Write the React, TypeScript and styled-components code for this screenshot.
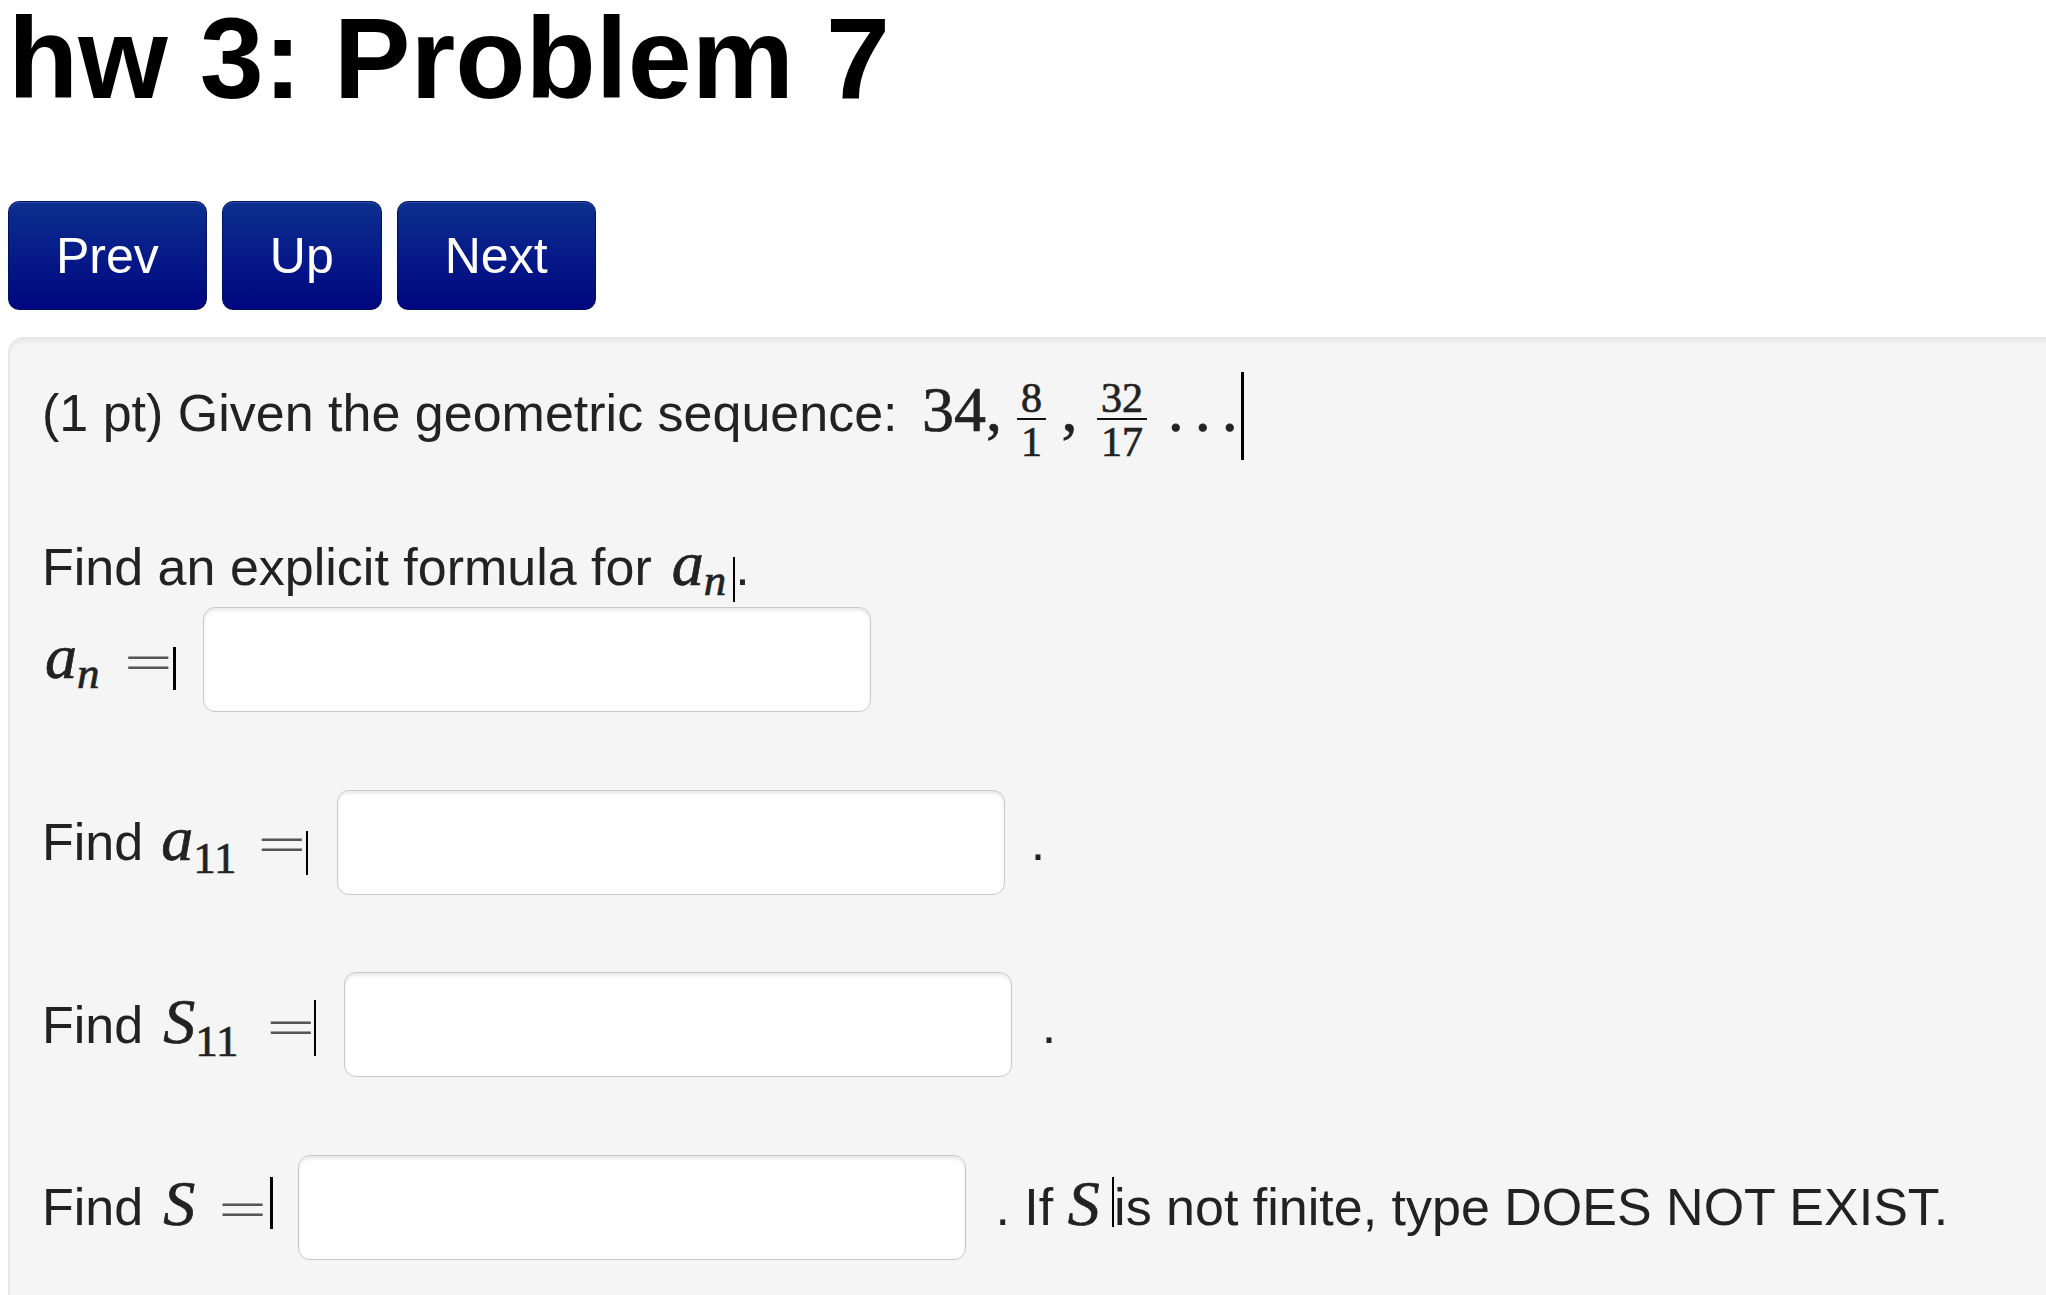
import React from "react";
import styled, { createGlobalStyle } from "styled-components";

const GlobalStyle = createGlobalStyle`
  html, body {
    margin: 0;
    padding: 0;
    overflow: hidden;
    background: #fff;
  }
  body {
    font-family: "Liberation Sans", Arial, sans-serif;
    color: #222;
  }
`;

const Page = styled.div`
  padding-left: 8px;
`;

const Title = styled.h1`
  margin: 0;
  font-size: 115px;
  line-height: 116px;
  font-weight: bold;
  color: #000;
`;

const NavBar = styled.div`
  display: flex;
  gap: 15px;
  margin-top: 85px;
`;

const NavButton = styled.button`
  font-family: "Liberation Sans", Arial, sans-serif;
  font-size: 50px;
  line-height: 60px;
  padding: 23.5px 47px;
  color: #fff;
  border: 1px solid #00115e;
  border-radius: 11px;
  background: linear-gradient(to bottom, #0c2f8f, #000680);
  box-shadow: inset 0 1px 0 rgba(255, 255, 255, 0.15);
  cursor: pointer;
`;

const Well = styled.div`
  margin-top: 27px;
  margin-right: -40px;
  padding: 45px 0 120px 33px;
  background: #f5f5f5;
  border: 1px solid #e3e3e3;
  border-radius: 15px;
  box-shadow: inset 0 4px 4px rgba(0, 0, 0, 0.05);
  font-size: 52px;
  white-space: nowrap;
`;

const SequenceLine = styled.div`
  line-height: 60px;
  height: 74px;
  margin-bottom: 80px;
`;

const TextLine = styled.div`
  line-height: 60px;
`;

const Math = styled.span<{ $ml?: number }>`
  font-family: "Liberation Serif", "Times New Roman", serif;
  font-size: 64px;
  line-height: 40px;
  -webkit-text-stroke: 0.7px currentColor;
  margin-left: ${(p) => p.$ml ?? 0}px;
`;

const Dots = styled(Math)`
  letter-spacing: 11px;
  margin-right: -11px;
`;

const Period = styled.span`
  margin-left: 9px;
`;

const Fraction = styled.span<{ $ml?: number }>`
  display: inline-flex;
  flex-direction: column;
  vertical-align: 19px;
  margin-left: ${(p) => p.$ml ?? 0}px;
  font-family: "Liberation Serif", "Times New Roman", serif;
  font-size: 42px;
  line-height: 30px;
  text-align: center;
  -webkit-text-stroke: 0.7px currentColor;
`;

const FracPart = styled.span`
  display: block;
  padding: 0 4px;
`;

const FracBar = styled.span`
  display: block;
  height: 2px;
  margin: 5px 0 7px;
  background: #111;
`;

const Var = styled.i<{ $ml?: number }>`
  font-family: "Liberation Serif", "Times New Roman", serif;
  font-style: italic;
  font-size: 64px;
  line-height: 40px;
  -webkit-text-stroke: 0.7px currentColor;
  margin-left: ${(p) => p.$ml ?? 0}px;
`;

const Sub = styled.sub<{ $upright?: boolean; $drop?: number }>`
  font-size: 45px;
  line-height: 0;
  vertical-align: ${(p) => -(p.$drop ?? 10)}px;
  font-style: ${(p) => (p.$upright ? "normal" : "italic")};
`;

const Eq = styled.span<{ $ml: number }>`
  font-family: "DejaVu Sans", sans-serif;
  font-weight: 200;
  font-size: 64px;
  line-height: 40px;
  color: #555;
  vertical-align: -5px;
  margin-left: ${(p) => p.$ml}px;
`;

/* the stray vertical marks MathJax left beside the formulas */
const Caret = styled.span<{ $up: number; $down: number; $dx?: number }>`
  position: relative;
  display: inline-block;
  width: 0;
  height: 0;
  &::after {
    content: "";
    position: absolute;
    left: ${(p) => p.$dx ?? 0}px;
    bottom: ${(p) => -p.$down}px;
    width: 2.5px;
    height: ${(p) => p.$up + p.$down}px;
    background: #000;
  }
`;

const AnswerRow = styled.div<{ $mt: number }>`
  display: flex;
  align-items: center;
  margin-top: ${(p) => p.$mt}px;
`;

const Label = styled.span`
  line-height: 60px;
`;

const AnswerBox = styled.input<{ $ml: number }>`
  flex: none;
  box-sizing: border-box;
  width: 668px;
  height: 105px;
  margin: 0 0 0 ${(p) => p.$ml}px;
  padding: 0 16px;
  font-family: "Liberation Sans", Arial, sans-serif;
  font-size: 50px;
  background: #fff;
  border: 1px solid #c8c8c8;
  border-radius: 12px;
  box-shadow: inset 0 3px 3px rgba(0, 0, 0, 0.08);
  outline: none;
`;

const Tail = styled.span<{ $ml: number }>`
  line-height: 60px;
  margin-left: ${(p) => p.$ml}px;
`;

const App: React.FC = () => {
  return (
    <Page>
      <GlobalStyle />
      <Title>hw 3: Problem 7</Title>
      <NavBar>
        <NavButton>Prev</NavButton>
        <NavButton>Up</NavButton>
        <NavButton>Next</NavButton>
      </NavBar>
      <Well>
        <SequenceLine>
          (1 pt) Given the geometric sequence:
          <Math $ml={24.5}>34,</Math>
          <Fraction $ml={15}>
            <FracPart>8</FracPart>
            <FracBar />
            <FracPart>1</FracPart>
          </Fraction>
          <Math $ml={15.5}>,</Math>
          <Fraction $ml={19.5}>
            <FracPart>32</FracPart>
            <FracBar />
            <FracPart>17</FracPart>
          </Fraction>
          <Dots $ml={20.6}>...</Dots>
          <Caret $up={59} $down={29} $dx={3.4} />
        </SequenceLine>

        <TextLine>
          Find an explicit formula for
          <Var $ml={20}>
            a<Sub>n</Sub>
          </Var>
          <Caret $up={28} $down={17} $dx={6.5} />
          <Period>.</Period>
        </TextLine>

        <AnswerRow $mt={10}>
          <Label>
            <Var $ml={3}>
              a<Sub>n</Sub>
            </Var>
            <Eq $ml={22}>=</Eq>
            <Caret $up={31} $down={12} $dx={-2} />
          </Label>
          <AnswerBox $ml={28} type="text" />
        </AnswerRow>

        <AnswerRow $mt={77.5}>
          <Label>
            Find
            <Var $ml={18}>
              a<Sub $upright $drop={13}>11</Sub>
            </Var>
            <Eq $ml={18.6}>=</Eq>
            <Caret $up={29} $down={15} $dx={-3} />
          </Label>
          <AnswerBox $ml={28} type="text" />
          <Tail $ml={26}>.</Tail>
        </AnswerRow>

        <AnswerRow $mt={77.5}>
          <Label>
            Find
            <Var $ml={20}>
              S<Sub $upright $drop={13}>11</Sub>
            </Var>
            <Eq $ml={25.6}>=</Eq>
            <Caret $up={43} $down={13} $dx={-4} />
          </Label>
          <AnswerBox $ml={26} type="text" />
          <Tail $ml={30}>.</Tail>
        </AnswerRow>

        <AnswerRow $mt={77.5}>
          <Label>
            Find
            <Var $ml={20}>S</Var>
            <Eq $ml={20.6}>=</Eq>
            <Caret $up={48} $down={4} $dx={1} />
          </Label>
          <AnswerBox $ml={29} type="text" />
          <Tail $ml={29}>
            . If <Var>S</Var>
            <Caret $up={48} $down={2} $dx={12} /> is not finite, type DOES NOT EXIST.
          </Tail>
        </AnswerRow>
      </Well>
    </Page>
  );
};

export default App;
